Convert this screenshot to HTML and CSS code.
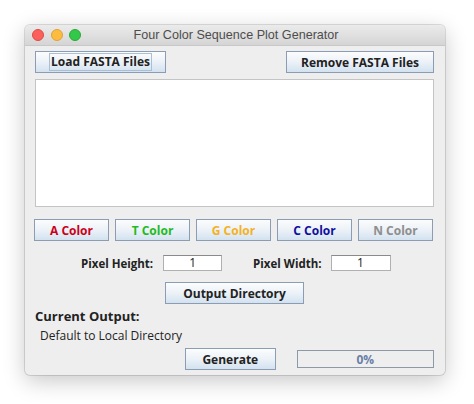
FILE: index.html
```html
<!DOCTYPE html>
<html>
<head>
<meta charset="utf-8">
<link rel="stylesheet" href="styles.css">
</head>
<body>
<div class="window">
  <div class="titlebar">
    <div class="lights">
      <span class="light red"></span>
      <span class="light yellow"></span>
      <span class="light green"></span>
    </div>
    <div class="title">Four Color Sequence Plot Generator</div>
  </div>
  <div class="content">
    <div class="row-top">
      <button class="btn btn-load"><span class="focus">Load FASTA Files</span></button>
      <button class="btn btn-remove">Remove FASTA Files</button>
    </div>
    <div class="listbox"></div>
    <div class="colors">
      <button class="btn c-a">A Color</button>
      <button class="btn c-t">T Color</button>
      <button class="btn c-g">G Color</button>
      <button class="btn c-c">C Color</button>
      <button class="btn c-n">N Color</button>
    </div>
    <div class="pixels">
      <span class="lbl">Pixel Height:</span>
      <span class="field f-h">1</span>
      <span class="lbl lbl-w">Pixel Width:</span>
      <span class="field f-w">1</span>
    </div>
    <div class="outdir-row">
      <button class="btn btn-outdir">Output Directory</button>
    </div>
    <div class="cur-label">Current Output:</div>
    <div class="cur-value">Default to Local Directory</div>
    <div class="bottom-row">
      <button class="btn btn-gen">Generate</button>
      <div class="progress">0%</div>
    </div>
  </div>
</div>
</body>
</html>
```

FILE: styles.css
```css
html, body {
  margin: 0;
  padding: 0;
  background: #ffffff;
}
body {
  width: 474px;
  height: 404px;
  overflow: hidden;
  font-family: "Open Sans", "Liberation Sans", sans-serif;
}
.window {
  margin: 25px 0 0 25px;
  width: 420px;
  height: 350px;
  border-radius: 5px;
  background: #eeeeee;
  box-shadow: 0 6px 22px rgba(0,0,0,0.22), 0 0 0 1px rgba(0,0,0,0.12);
  overflow: hidden;
}
.titlebar {
  height: 20px;
  position: relative;
  background: linear-gradient(#ebebeb, #d5d5d5);
  border-bottom: 1px solid #c8c8c8;
  display: flex;
  align-items: center;
  justify-content: center;
}
.lights {
  position: absolute;
  left: 7px;
  top: 4px;
  display: flex;
  gap: 6.5px;
}
.light {
  width: 12px;
  height: 12px;
  border-radius: 50%;
  box-sizing: border-box;
}
.red { background: #fc605c; border: 0.5px solid #de4a45; }
.yellow { background: #fdbc40; border: 0.5px solid #dea236; }
.green { background: #34c84a; border: 0.5px solid #27aa35; }
.title {
  font-family: "Liberation Sans", Arial, sans-serif;
  font-size: 12.6px;
  color: #4d4d4d;
  margin-left: 2px;
}
.content {
  padding: 5px 11px 0 10px;
  display: flex;
  flex-direction: column;
}
.btn {
  font-family: "Open Sans", "Liberation Sans", sans-serif;
  font-weight: 700;
  font-size: 12px;
  height: 22px;
  padding: 0;
  border: 1px solid #8c9db3;
  background: linear-gradient(#fbfcfd 0%, #eef3f8 45%, #d3e2f0 100%);
  color: #222;
  display: flex;
  align-items: center;
  justify-content: center;
  box-sizing: border-box;
}
.row-top {
  display: flex;
  justify-content: space-between;
}
.btn-load { width: 131px; }
.btn-remove { width: 148px; }
.focus {
  border: 1px solid #a8bfd6;
  padding: 0 1px;
  line-height: 16px;
}
.listbox {
  margin-top: 6px;
  height: 126px;
  background: #ffffff;
  border: 1px solid #c4c4c4;
}
.colors {
  margin-top: 12px;
  margin-left: -1px;
  display: grid;
  grid-template-columns: repeat(5, 75px);
  column-gap: 6px;
}
.c-a { color: #cc0018; }
.c-t { color: #1fbb22; }
.c-g { color: #f4b21e; }
.c-c { color: #0f0f9e; }
.c-n { color: #8e8e8e; }
.pixels {
  margin-top: 14px;
  display: flex;
  align-items: center;
  padding-left: 46px;
  height: 16px;
}
.lbl {
  font-size: 11.5px;
  font-weight: 700;
  color: #222;
}
.field {
  width: 59px;
  height: 16px;
  box-sizing: border-box;
  background: #fff;
  border: 1px solid #b0b0b0;
  border-top-color: #8a8a8a;
  font-size: 12px;
  line-height: 14px;
  text-align: center;
  color: #222;
}
.f-h { margin-left: 10px; }
.lbl-w { margin-left: 31px; }
.f-w { margin-left: 9px; width: 60px; }
.outdir-row {
  margin-top: 11px;
  display: flex;
  justify-content: center;
}
.btn-outdir { width: 139px; }
.cur-label {
  margin-top: 3px;
  font-size: 13px;
  font-weight: 700;
  color: #222;
  line-height: 18px;
}
.cur-value {
  margin-top: 2px;
  padding-left: 5px;
  font-size: 12px;
  color: #222;
  line-height: 18px;
}
.bottom-row {
  margin-top: 3px;
  display: flex;
  align-items: center;
  padding-left: 150px;
}
.btn-gen { width: 91px; }
.progress {
  margin-left: 21px;
  width: 138px;
  height: 18px;
  box-sizing: border-box;
  border: 1px solid #8e99a8;
  background: #eeeeee;
  font-size: 12px;
  font-weight: 700;
  color: #6a7fa8;
  display: flex;
  align-items: center;
  justify-content: center;
}
```
